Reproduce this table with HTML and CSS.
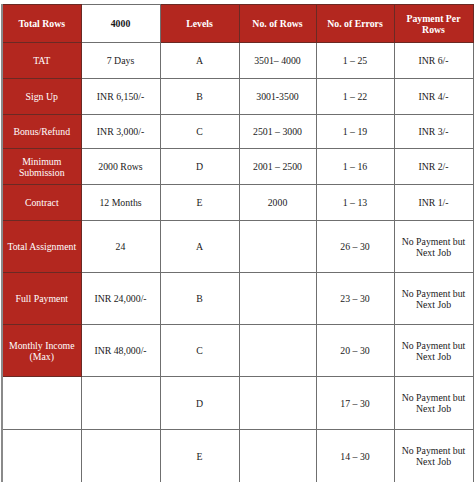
FILE: index.html
```
<!DOCTYPE html>
<html>
<head>
<meta charset="utf-8">
<link rel="stylesheet" href="styles.css">
</head>
<body>
<table class="grid">
<colgroup>
<col class="c1"><col class="c2"><col class="c3"><col class="c4"><col class="c5"><col class="c6">
</colgroup>
<tr class="hdr">
<td class="red b">Total Rows</td><td class="b">4000</td><td class="red b">Levels</td><td class="red b">No. of Rows</td><td class="red b">No. of Errors</td><td class="red b">Payment Per<br>Rows</td>
</tr>
<tr class="r36"><td class="red">TAT</td><td>7 Days</td><td>A</td><td>3501– 4000</td><td>1 – 25</td><td>INR 6/-</td></tr>
<tr class="r36"><td class="red">Sign Up</td><td>INR 6,150/-</td><td>B</td><td>3001-3500</td><td>1 – 22</td><td>INR 4/-</td></tr>
<tr class="r35"><td class="red">Bonus/Refund</td><td>INR 3,000/-</td><td>C</td><td>2501 – 3000</td><td>1 – 19</td><td>INR 3/-</td></tr>
<tr class="r36"><td class="red">Minimum<br>Submission</td><td>2000 Rows</td><td>D</td><td>2001 – 2500</td><td>1 – 16</td><td>INR 2/-</td></tr>
<tr class="r36"><td class="red">Contract</td><td>12 Months</td><td>E</td><td>2000</td><td>1 – 13</td><td>INR 1/-</td></tr>
<tr class="r52"><td class="red">Total Assignment</td><td>24</td><td>A</td><td></td><td>26 – 30</td><td>No Payment but<br>Next Job</td></tr>
<tr class="r52"><td class="red">Full Payment</td><td>INR 24,000/-</td><td>B</td><td></td><td>23 – 30</td><td>No Payment but<br>Next Job</td></tr>
<tr class="r52"><td class="red">Monthly Income<br>(Max)</td><td>INR 48,000/-</td><td>C</td><td></td><td>20 – 30</td><td>No Payment but<br>Next Job</td></tr>
<tr class="r53"><td></td><td></td><td>D</td><td></td><td>17 – 30</td><td>No Payment but<br>Next Job</td></tr>
<tr class="r53"><td></td><td></td><td>E</td><td></td><td>14 – 30</td><td>No Payment but<br>Next Job</td></tr>
</table>
</body>
</html>
```
FILE: styles.css
```
html, body {
  margin: 0;
  padding: 0;
  background: #ffffff;
}
body {
  padding: 4px 0 0 1px;
  overflow: hidden;
}
.grid {
  border-collapse: collapse;
  table-layout: fixed;
  width: 471px;
  font-family: "Liberation Serif", "Times New Roman", serif;
  font-size: 9.8px;
  line-height: 11px;
  color: #1a1a1a;
}
.c1 { width: 79px; }
.c2 { width: 79px; }
.c3 { width: 79px; }
.c4 { width: 77px; }
.c5 { width: 78px; }
.c6 { width: 79px; }
.grid td {
  border: 1px solid #6f6f6f;
  text-align: center;
  vertical-align: middle;
  padding: 0 2px;
  background: #ffffff;
}
.grid tr td:first-child {
  border-left: 2px solid #8a8a8a;
}
.grid td.red {
  background: #b3271f;
  color: #ffffff;
  border-color: #6a2a24;
}
.grid td.b {
  font-weight: bold;
}
.hdr td { height: 37px; }
.r36 td { height: 35px; }
.r35 td { height: 33px; }
.r52 td { height: 51px; }
.r53 td { height: 52px; }
```
